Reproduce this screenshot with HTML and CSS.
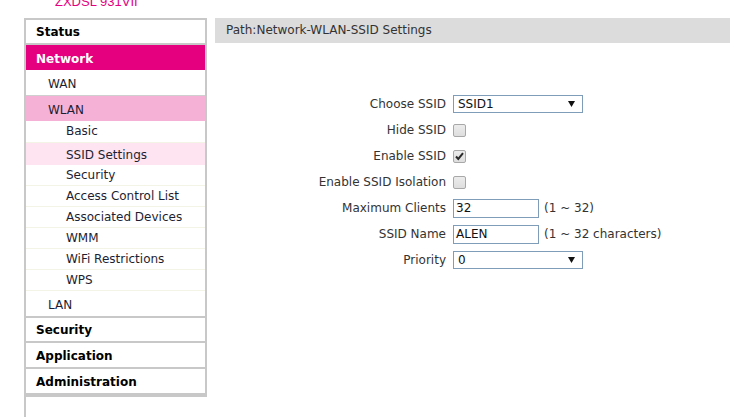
FILE: index.html
```html
<!DOCTYPE html>
<html>
<head>
<meta charset="utf-8">
<link rel="stylesheet" href="styles.css">
</head>
<body>
<div class="top"><div class="brand">ZXDSL 931VII</div></div>
<div class="main">
  <div class="leftcol">
    <ul class="menu">
      <li class="l1 first">Status</li>
      <li class="l1 active">Network</li>
      <li class="l2 sep">WAN</li>
      <li class="l2 open">WLAN</li>
      <li class="l3 basic">Basic</li>
      <li class="l3 current">SSID Settings</li>
      <li class="l3">Security</li>
      <li class="l3">Access Control List</li>
      <li class="l3">Associated Devices</li>
      <li class="l3">WMM</li>
      <li class="l3">WiFi Restrictions</li>
      <li class="l3">WPS</li>
      <li class="l2 last">LAN</li>
      <li class="l1 short">Security</li>
      <li class="l1">Application</li>
      <li class="l1">Administration</li>
    </ul>
  </div>
  <div class="content">
    <div class="path">Path:Network-WLAN-SSID Settings</div>
    <div class="form">
      <div class="lbl">Choose SSID</div>
      <div class="ctl"><div class="select"><span>SSID1</span><svg class="arrow" width="7" height="6" viewBox="0 0 7 6"><path d="M0 0H7L3.5 6Z" fill="#111"/></svg></div></div>

      <div class="lbl">Hide SSID</div>
      <div class="ctl"><span class="cb"></span></div>

      <div class="lbl">Enable SSID</div>
      <div class="ctl"><span class="cb"><svg width="11" height="11" viewBox="0 0 11 11"><path d="M2 5.5L4.3 8L9 2.2" fill="none" stroke="#2a2a2a" stroke-width="2"/></svg></span></div>

      <div class="lbl">Enable SSID Isolation</div>
      <div class="ctl"><span class="cb"></span></div>

      <div class="lbl">Maximum Clients</div>
      <div class="ctl"><span class="inp">32</span><span class="hint">(1 ~ 32)</span></div>

      <div class="lbl">SSID Name</div>
      <div class="ctl"><span class="inp">ALEN</span><span class="hint">(1 ~ 32 characters)</span></div>

      <div class="lbl">Priority</div>
      <div class="ctl"><div class="select"><span>0</span><svg class="arrow" width="7" height="6" viewBox="0 0 7 6"><path d="M0 0H7L3.5 6Z" fill="#111"/></svg></div></div>
    </div>
  </div>
</div>
</body>
</html>
```
FILE: styles.css
```css
html, body {
  margin: 0;
  padding: 0;
  background: #fff;
  overflow: hidden;
}
body {
  width: 730px;
  height: 417px;
  font-family: "DejaVu Sans", Verdana, sans-serif;
  font-size: 12px;
  color: #222;
}
.top {
  height: 18px;
  display: flow-root;
}
.brand {
  margin-top: -6px;
  padding-left: 55px;
  font-family: "Liberation Sans", Arial, sans-serif;
  font-size: 13px;
  line-height: 15px;
  color: #e4007f;
}
.main {
  display: flex;
  margin-left: 24px;
  height: 399px;
}
.leftcol {
  width: 181px;
  border-left: 2px solid #c8c8c8;
  flex: none;
}
.menu {
  list-style: none;
  margin: 0;
  padding: 0;
  border: 2px solid #c8c8c8;
  border-left: none;
}
.menu li {
  white-space: nowrap;
  overflow: hidden;
}
.l1 {
  height: 24px;
  line-height: 26px;
  padding-left: 10px;
  font-weight: bold;
  color: #000;
  border-bottom: 2px solid #c8c8c8;
}
.l1.first,
.l1.short {
  height: 23px;
  line-height: 25px;
}
.l1.active {
  height: 25px;
  line-height: 28px;
  background: #e4007f;
  color: #fff;
  border-bottom: none;
}
.l2 {
  height: 25px;
  line-height: 29px;
  padding-left: 22px;
  color: #1e1e32;
}
.l2.sep {
  border-bottom: 1px solid #cfcfcf;
}
.l2.open {
  background: #f6b2d6;
}
.l2.last {
  border-bottom: 2px solid #c8c8c8;
}
.l3 {
  height: 20px;
  line-height: 21px;
  padding-left: 40px;
  color: #1e1e32;
  border-bottom: 1px solid #f3f3e6;
}
.l3.basic {
  height: 21px;
  line-height: 20px;
}
.l3.current {
  height: 21px;
  line-height: 24px;
  background: #fde4f0;
  border-bottom-color: #fde4f0;
}
.content {
  flex: 1;
  margin-left: 8px;
}
.path {
  height: 25px;
  line-height: 25px;
  padding-left: 11px;
  background: #dcdcdc;
  color: #333;
}
.form {
  margin-top: 48px;
  display: grid;
  grid-template-columns: 231px 1fr;
  grid-auto-rows: 26px;
  column-gap: 7px;
  align-items: center;
}
.lbl {
  text-align: right;
  color: #333;
  white-space: nowrap;
}
.ctl {
  display: flex;
  align-items: center;
  gap: 5px;
  color: #333;
}
.select {
  width: 130px;
  height: 18px;
  box-sizing: border-box;
  border: 1px solid #7f9db9;
  display: flex;
  align-items: center;
  padding-left: 4px;
  padding-right: 7px;
  color: #111;
}
.select .arrow {
  margin-left: auto;
}
.cb {
  width: 13px;
  height: 13px;
  box-sizing: border-box;
  border: 1px solid #a8a8a8;
  border-radius: 2px;
  background: linear-gradient(#ececec, #dedede);
  display: flex;
  align-items: center;
  justify-content: center;
}
.inp {
  width: 86px;
  height: 19px;
  box-sizing: border-box;
  border: 1px solid #7f9db9;
  padding-left: 2px;
  line-height: 17px;
  color: #111;
}
.hint {
  color: #333;
  white-space: nowrap;
}
```
